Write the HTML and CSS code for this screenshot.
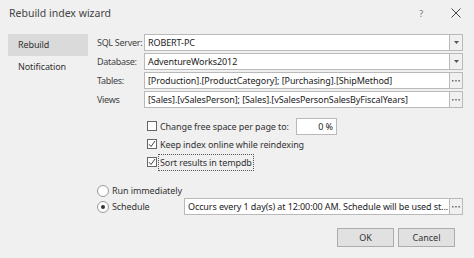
FILE: index.html
```html
<!DOCTYPE html>
<html lang="en">
<head>
    <meta charset="UTF-8">
    <meta name="viewport" content="width=device-width, initial-scale=1.0">
    <title>Rebuild index wizard</title>
    <link rel="stylesheet" href="styles.css">
</head>
<body>

    <div class="dialog">
        <div class="titlebar">
            <span class="title">Rebuild index wizard</span>
            <span class="help">?</span>
            <span class="close">
                <svg width="10" height="10" viewBox="0 0 10 10"><path d="M0.5 0.5 L9.5 9.5 M9.5 0.5 L0.5 9.5" stroke="#444" stroke-width="1" fill="none"/></svg>
            </span>
        </div>

        <div class="body">
            <div class="nav">
                <div class="nav-item active">Rebuild</div>
                <div class="nav-item">Notification</div>
            </div>

            <div class="form">
                <div class="field">
                    <span class="label">SQL Server:</span>
                    <div class="box">
                        <span class="value">ROBERT-PC</span>
                        <span class="btn"><svg width="5" height="3" viewBox="0 0 5 3"><path d="M0 0 H5 L2.5 3 Z" fill="#555"/></svg></span>
                    </div>
                </div>
                <div class="field">
                    <span class="label">Database:</span>
                    <div class="box">
                        <span class="value">AdventureWorks2012</span>
                        <span class="btn"><svg width="5" height="3" viewBox="0 0 5 3"><path d="M0 0 H5 L2.5 3 Z" fill="#555"/></svg></span>
                    </div>
                </div>
                <div class="field">
                    <span class="label">Tables:</span>
                    <div class="box">
                        <span class="value">[Production].[ProductCategory]; [Purchasing].[ShipMethod]</span>
                        <span class="btn"><svg width="8" height="2" viewBox="0 0 8 2"><path d="M0 0h1.5v1.5H0zM3.2 0h1.5v1.5H3.2zM6.4 0h1.5v1.5H6.4z" fill="#666"/></svg></span>
                    </div>
                </div>
                <div class="field">
                    <span class="label">Views</span>
                    <div class="box">
                        <span class="value">[Sales].[vSalesPerson]; [Sales].[vSalesPersonSalesByFiscalYears]</span>
                        <span class="btn"><svg width="8" height="2" viewBox="0 0 8 2"><path d="M0 0h1.5v1.5H0zM3.2 0h1.5v1.5H3.2zM6.4 0h1.5v1.5H6.4z" fill="#666"/></svg></span>
                    </div>
                </div>

                <div class="options">
                    <div class="check">
                        <span class="cb"></span>
                        <span>Change free space per page to:</span>
                        <span class="pct">0 %</span>
                    </div>
                    <div class="check">
                        <span class="cb checked"><svg width="8" height="8" viewBox="0 0 8 8"><path d="M1 4.2 L3 6.5 L7 1" stroke="#444" stroke-width="1" fill="none"/></svg></span>
                        <span>Keep index online while reindexing</span>
                    </div>
                    <div class="check">
                        <span class="cb checked"><svg width="8" height="8" viewBox="0 0 8 8"><path d="M1 4.2 L3 6.5 L7 1" stroke="#444" stroke-width="1" fill="none"/></svg></span>
                        <span class="focus">Sort results in tempdb</span>
                    </div>
                </div>

                <div class="run">
                    <div class="radio-row">
                        <span class="radio"></span>
                        <span>Run immediately</span>
                    </div>
                    <div class="radio-row schedule">
                        <span class="radio-label">
                            <span class="radio selected"></span>
                            <span>Schedule</span>
                        </span>
                        <div class="box">
                            <span class="value">Occurs every 1 day(s) at 12:00:00 AM. Schedule will be used st...</span>
                            <span class="btn"><svg width="8" height="2" viewBox="0 0 8 2"><path d="M0 0h1.5v1.5H0zM3.2 0h1.5v1.5H3.2zM6.4 0h1.5v1.5H6.4z" fill="#666"/></svg></span>
                        </div>
                    </div>
                </div>
            </div>
        </div>

        <div class="footer">
            <button class="button">OK</button>
            <button class="button">Cancel</button>
        </div>
    </div>

</body>
</html>
```

FILE: styles.css
```css
body {
    margin: 0;
    font-family: "Noto Sans", "Open Sans", sans-serif;
    font-size: 9px;
    letter-spacing: -0.1px;
    color: #333;
    background: #f0f0f0;
}
.dialog {
    width: 474px;
    height: 258px;
    background: #f0f0f0;
    overflow: hidden;
}
.titlebar {
    height: 34px;
    display: flex;
    align-items: flex-start;
    padding: 5px 13px 0 9px;
    box-sizing: border-box;
}
.title {
    font-size: 10.5px;
    letter-spacing: 0;
    color: #444;
    flex: 1;
    line-height: 16px;
}
.help {
    font-size: 9px;
    color: #777;
    margin-right: 28px;
    line-height: 14px;
    padding-top: 2px;
}
.close {
    padding-top: 3px;
}
.body {
    display: flex;
}
.nav {
    width: 80px;
    flex-shrink: 0;
    margin-left: 8px;
}
.nav-item {
    height: 22px;
    line-height: 22px;
    padding-left: 10px;
    color: #333;
}
.nav-item.active {
    background: #dadada;
}
.form {
    flex: 1;
    min-width: 0;
    padding: 0 11px 0 9px;
}
.field {
    display: flex;
    align-items: center;
    height: 17px;
    margin-bottom: 2px;
}
.label {
    width: 47px;
    flex-shrink: 0;
    white-space: nowrap;
    letter-spacing: -0.3px;
    color: #444;
}
.box {
    flex: 1;
    display: flex;
    height: 17px;
    border: 1px solid #b9b9b9;
    box-sizing: border-box;
    background: white;
    min-width: 0;
}
.value {
    flex: 1;
    min-width: 0;
    padding-left: 3px;
    line-height: 15px;
    white-space: nowrap;
    overflow: hidden;
    color: #222;
}
.btn {
    width: 12px;
    flex-shrink: 0;
    border-left: 1px solid #b9b9b9;
    background: #f0f0f0;
    display: flex;
    align-items: center;
    justify-content: center;
}
.options {
    margin-top: 9px;
    padding-left: 50px;
}
.check {
    display: flex;
    align-items: center;
    height: 18px;
}
.cb {
    width: 10px;
    height: 10px;
    border: 1px solid #666;
    box-sizing: border-box;
    background: white;
    margin-right: 3px;
    display: flex;
    align-items: center;
    justify-content: center;
}
.pct {
    width: 41px;
    height: 17px;
    box-sizing: border-box;
    border: 1px solid #b9b9b9;
    background: white;
    text-align: right;
    padding-right: 3px;
    line-height: 15px;
    margin-left: 7px;
    color: #222;
}
.focus {
    outline: 1px dotted #555;
    outline-offset: 1px;
}
.run {
    margin-top: 12px;
}
.radio-row {
    display: flex;
    align-items: center;
    height: 15px;
}
.radio-row.schedule {
    height: 17px;
}
.radio-label {
    width: 87px;
    flex-shrink: 0;
    display: flex;
    align-items: center;
}
.radio {
    width: 12px;
    height: 12px;
    border: 1px solid #9a9a9a;
    border-radius: 50%;
    box-sizing: border-box;
    background: white;
    margin-right: 3px;
    position: relative;
}
.radio.selected::after {
    content: "";
    position: absolute;
    left: 3px;
    top: 3px;
    width: 4px;
    height: 4px;
    border-radius: 50%;
    background: #333;
}
.footer {
    display: flex;
    justify-content: flex-end;
    gap: 4px;
    padding: 13px 19px 0 0;
}
.button {
    width: 57px;
    height: 19px;
    border: 1px solid #adadad;
    background: #e1e1e1;
    font-family: "Noto Sans", "Open Sans", sans-serif;
    font-size: 9px;
    color: #333;
    padding: 0;
}
```
